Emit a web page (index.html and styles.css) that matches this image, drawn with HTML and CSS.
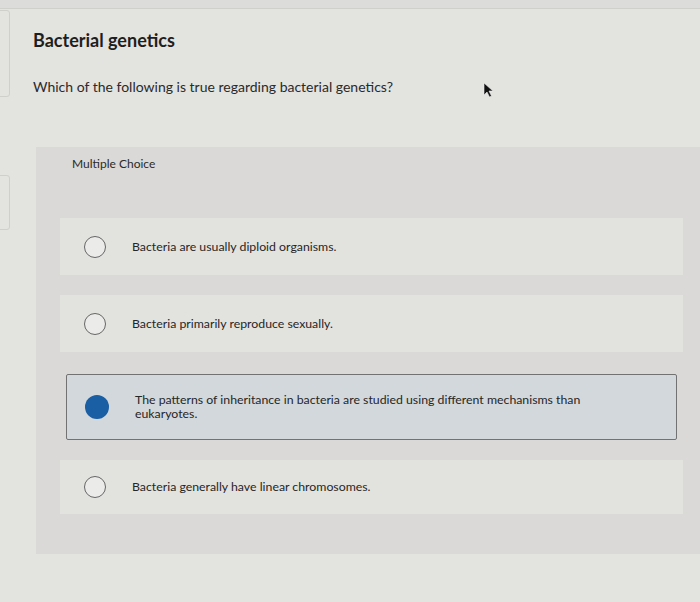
FILE: index.html
```html
<!DOCTYPE html>
<html lang="en">
<head>
<meta charset="utf-8">
<title>Bacterial genetics</title>
<link rel="stylesheet" href="styles.css">
</head>
<body>
<div class="topbar"></div>
<div class="rail rail-a"></div>
<div class="rail rail-b"></div>
<main class="page">
  <h1 class="title">Bacterial genetics</h1>
  <p class="question">Which of the following is true regarding bacterial genetics?</p>
  <section class="panel">
    <div class="panel-head">Multiple Choice</div>
    <div class="options">
      <div class="option">
        <span class="radio"></span>
        <span class="label">Bacteria are usually diploid organisms.</span>
      </div>
      <div class="option">
        <span class="radio"></span>
        <span class="label">Bacteria primarily reproduce sexually.</span>
      </div>
      <div class="option selected">
        <span class="radio"></span>
        <span class="label">The patterns of inheritance in bacteria are studied using different mechanisms than eukaryotes.</span>
      </div>
      <div class="option last">
        <span class="radio"></span>
        <span class="label">Bacteria generally have linear chromosomes.</span>
      </div>
    </div>
  </section>
</main>
<svg class="cursor" width="12" height="16" viewBox="0 0 12 16"><path d="M1 1 L1 13 L4 10 L6.5 15 L8.5 14 L6 9 L10 9 Z" fill="#111" stroke="#eee" stroke-width="0.6"/></svg>
</body>
</html>
```
FILE: styles.css
```css
html, body {
  margin: 0;
  padding: 0;
}
body {
  width: 700px;
  height: 602px;
  overflow: hidden;
  background: #e3e3e0;
  font-family: Lato, "Open Sans", Arial, sans-serif;
  color: #262626;
  position: relative;
}
.topbar {
  height: 8px;
  background: #dcdcda;
  border-bottom: 1px solid #cfcfcc;
}
.rail {
  position: absolute;
  left: -4px;
  width: 12px;
  border: 1px solid #cfcfcc;
  border-radius: 3px;
}
.rail-a { top: 10px; height: 85px; }
.rail-b { top: 175px; height: 53px; }
.page {
  padding: 20px 0 0 33px;
}
.title {
  margin: 0;
  font-size: 18px;
  font-weight: 700;
  line-height: 22px;
  color: #1e1e1e;
}
.question {
  margin: 27px 0 0 0;
  font-size: 14px;
  line-height: 18px;
  color: #2a2a2a;
}
.panel {
  margin: 51px 0 0 3px;
  background: #dad9d7;
  padding-bottom: 40px;
}
.panel-head {
  height: 45px;
  box-sizing: border-box;
  padding: 10px 0 0 36px;
  font-size: 12px;
  line-height: 14px;
  color: #2a2a2a;
}
.options {
  display: flex;
  flex-direction: column;
  gap: 20px;
  padding: 26px 17px 0 24px;
}
.option {
  display: flex;
  align-items: center;
  gap: 26px;
  min-height: 57px;
  box-sizing: border-box;
  padding: 0 20px 0 24px;
  background: #e2e2df;
}
.option.selected {
  min-height: 66px;
  margin: 2px 6px 0 6px;
  padding-left: 18px;
  background: #d3d8dc;
  border: 1px solid #727272;
  border-radius: 2px;
}
.option.last {
  min-height: 54px;
}
.radio {
  flex: none;
  width: 22px;
  height: 22px;
  box-sizing: border-box;
  border: 1.5px solid #666;
  border-radius: 50%;
  background: #ebebe9;
}
.selected .radio {
  width: 24px;
  height: 24px;
  border: none;
  background: #1a5ea3;
}
.label {
  max-width: 460px;
  font-size: 12.3px;
  line-height: 14px;
  color: #262626;
}
.cursor {
  position: absolute;
  left: 483px;
  top: 82px;
}
```
